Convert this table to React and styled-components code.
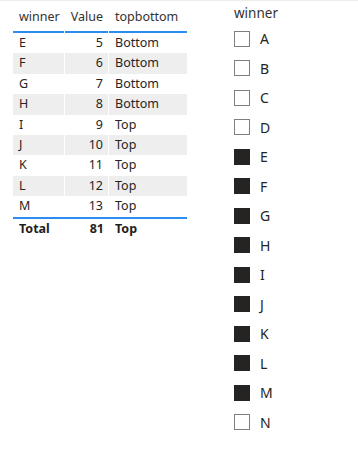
import styled, { createGlobalStyle } from "styled-components";

const GlobalStyle = createGlobalStyle`
  body {
    margin: 0;
    background: #ffffff;
    font-family: "Segoe UI", "Noto Sans", "Open Sans", sans-serif;
    color: #252423;
  }
`;

const Page = styled.div`
  display: flex;
  align-items: flex-start;
  width: 358px;
  height: 461px;
  border-top: 1px solid #ececec;
  box-sizing: border-box;
`;

const TableWrap = styled.div`
  margin-left: 13px;
  width: 174px;
`;

const Grid = styled.div`
  display: grid;
  grid-template-columns: 52px 44px 78px;
  font-size: 12.5px;
`;

const HeadCell = styled.div`
  height: 30px;
  display: flex;
  align-items: center;
  padding: ${(p) => (p.$right ? "0 5px 0 0" : "0 0 0 6px")};
  justify-content: ${(p) => (p.$right ? "flex-end" : "flex-start")};
  border-bottom: 2px solid #2b8df0;
  color: #333;
  margin-right: ${(p) => (p.$last ? "0" : "1px")};
`;

const Cell = styled.div`
  height: 20.4px;
  display: flex;
  align-items: center;
  justify-content: ${(p) => (p.$right ? "flex-end" : "flex-start")};
  padding: ${(p) => (p.$right ? "0 5px 0 0" : "0 0 0 6px")};
  background: ${(p) => (p.$alt ? "#eeeeee" : "#ffffff")};
  border-right: ${(p) => (p.$last ? "none" : "1px solid #ffffff")};
  line-height: 1;
`;

const TotalCell = styled(Cell)`
  font-weight: 700;
  border-top: 2px solid #2b8df0;
  height: 22px;
  background: #ffffff;
  border-right: none;
  color: #1f1e1d;
`;

const Slicer = styled.div`
  margin-left: 47px;
  display: flex;
  flex-direction: column;
`;

const SlicerTitle = styled.div`
  font-size: 13.5px;
  height: 23px;
  padding-top: 3px;
  box-sizing: border-box;
  color: #333;
`;

const Item = styled.div`
  display: flex;
  align-items: center;
  height: 29.5px;
  gap: 10px;
  font-size: 14px;
`;

const Box = styled.span`
  width: 16px;
  height: 16px;
  box-sizing: border-box;
  border: 1px solid ${(p) => (p.$checked ? "#252423" : "#7f7f7f")};
  background: ${(p) => (p.$checked ? "#252423" : "#ffffff")};
`;

const rows = [
  ["E", 5, "Bottom"],
  ["F", 6, "Bottom"],
  ["G", 7, "Bottom"],
  ["H", 8, "Bottom"],
  ["I", 9, "Top"],
  ["J", 10, "Top"],
  ["K", 11, "Top"],
  ["L", 12, "Top"],
  ["M", 13, "Top"],
];

const letters = "ABCDEFGHIJKLMN".split("");
const selected = "EFGHIJKLM";

export default function App() {
  return (
    <>
      <GlobalStyle />
      <Page>
        <TableWrap>
          <Grid>
            <HeadCell>winner</HeadCell>
            <HeadCell $right>Value</HeadCell>
            <HeadCell $last>topbottom</HeadCell>
            {rows.flatMap(([w, v, t], i) => [
              <Cell key={w + "a"} $alt={i % 2 === 1}>{w}</Cell>,
              <Cell key={w + "b"} $alt={i % 2 === 1} $right>{v}</Cell>,
              <Cell key={w + "c"} $alt={i % 2 === 1} $last>{t}</Cell>,
            ])}
            <TotalCell>Total</TotalCell>
            <TotalCell $right>81</TotalCell>
            <TotalCell $last>Top</TotalCell>
          </Grid>
        </TableWrap>
        <Slicer>
          <SlicerTitle>winner</SlicerTitle>
          {letters.map((l) => (
            <Item key={l}>
              <Box $checked={selected.includes(l)} />
              <span>{l}</span>
            </Item>
          ))}
        </Slicer>
      </Page>
    </>
  );
}
